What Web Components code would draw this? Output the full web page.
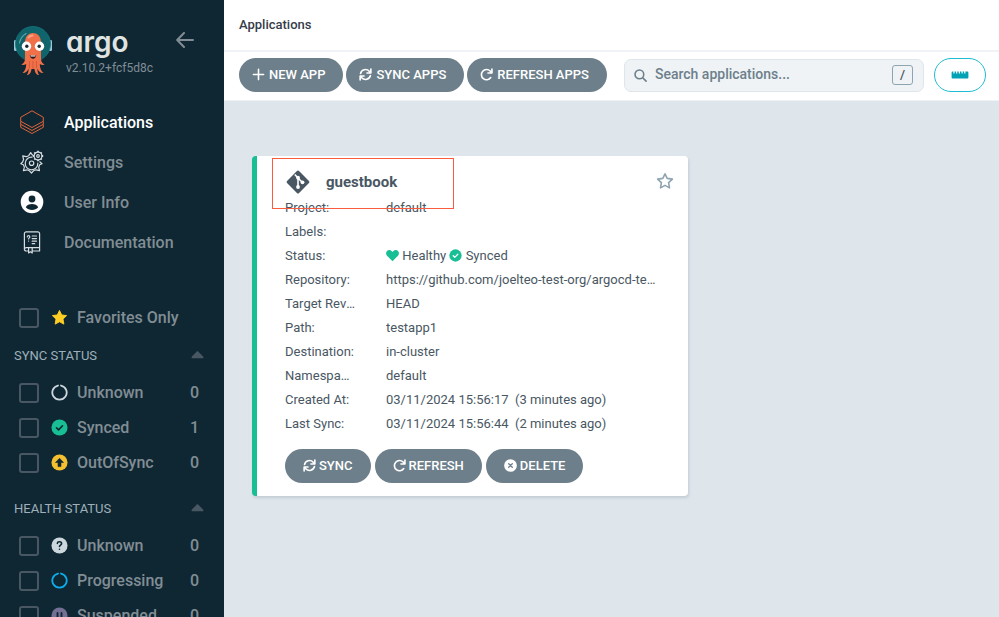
<!DOCTYPE html>
<html lang="en">
<head>
<meta charset="utf-8">
<title>Applications - Argo CD</title>
<style>
    body {
        margin: 0;
        font-family: Roboto, "Liberation Sans", sans-serif;
        font-size: 13px;
        color: #495763;
        background: #dee6ec;
    }
</style>
</head>
<body>
<argo-layout>
    <argo-sidebar slot="sidebar" version="v2.10.2+fcf5d8c">
        <argo-nav-item icon="apps" active>Applications</argo-nav-item>
        <argo-nav-item icon="settings">Settings</argo-nav-item>
        <argo-nav-item icon="user">User Info</argo-nav-item>
        <argo-nav-item icon="docs">Documentation</argo-nav-item>

        <argo-filter-row slot="filters" icon="star" label="Favorites Only"></argo-filter-row>
        <argo-filter-group slot="filters" heading="SYNC STATUS">
            <argo-filter-row icon="ring" color="#ccd6dd" label="Unknown" count="0"></argo-filter-row>
            <argo-filter-row icon="check" color="#18be94" label="Synced" count="1"></argo-filter-row>
            <argo-filter-row icon="up" color="#f4c030" label="OutOfSync" count="0"></argo-filter-row>
        </argo-filter-group>
        <argo-filter-group slot="filters" heading="HEALTH STATUS">
            <argo-filter-row icon="question" color="#ccd6dd" label="Unknown" count="0"></argo-filter-row>
            <argo-filter-row icon="ring" color="#0dadea" label="Progressing" count="0"></argo-filter-row>
            <argo-filter-row icon="pause" color="#766f94" label="Suspended" count="0"></argo-filter-row>
        </argo-filter-group>
    </argo-sidebar>

    <argo-toolbar slot="header" heading="Applications">
        <argo-button icon="plus" compact>NEW APP</argo-button>
        <argo-button icon="sync" compact>SYNC APPS</argo-button>
        <argo-button icon="refresh" compact>REFRESH APPS</argo-button>
        <argo-search slot="search"></argo-search>
    </argo-toolbar>

    <argo-app-card name="guestbook">
        <argo-field label="Project:">default</argo-field>
        <argo-field label="Labels:"></argo-field>
        <argo-field label="Status:"><argo-icon name="heart" style="--size: 13px; color: #18be94"></argo-icon> Healthy <argo-icon name="check" style="--size: 13px; --mark: #fff; color: #18be94"></argo-icon> Synced</argo-field>
        <argo-field label="Repository:">https://github.com/joelteo-test-org/argocd-test-apps</argo-field>
        <argo-field label="Target Revision:">HEAD</argo-field>
        <argo-field label="Path:">testapp1</argo-field>
        <argo-field label="Destination:">in-cluster</argo-field>
        <argo-field label="Namespace:">default</argo-field>
        <argo-field label="Created At:">03/11/2024 15:56:17 &nbsp;(3 minutes ago)</argo-field>
        <argo-field label="Last Sync:">03/11/2024 15:56:44 &nbsp;(2 minutes ago)</argo-field>
        <argo-button slot="actions" icon="sync">SYNC</argo-button>
        <argo-button slot="actions" icon="refresh">REFRESH</argo-button>
        <argo-button slot="actions" icon="times">DELETE</argo-button>
    </argo-app-card>
</argo-layout>

<script>
const ICONS = {
    apps: ['0 0 24 24', `<g fill="none" stroke="#e0643a" stroke-width="1" stroke-linejoin="round">
        <path d="M12 .8 23.3 7.300v4L12 17.500.7 11.300v-4z"/>
        <path d="M.7 11.300v3L12 20.500l11.300-6.200v-3M.7 14.300v3L12 23.500l11.300-6.200v-3"/></g>`],
    settings: ['0 0 24 24', `<g fill="none" stroke="#d6dcdf" stroke-width="1.200" stroke-linejoin="round" stroke-linecap="round">
        <path d="M12.500 5.200 10.700 2.600 8.700 5.700 6.300 6.700 2.700 5.800 3.600 9.500 2.600 12 .8 13.700l2.600 1.100 1 2.400-1 3.500 3.600-.9 2.400 1L11.500 23l2-2.200 2.500-1 3.500.9-.8-3.500 1-2.500 2.300-1.100-2.200-1.800"/>
        <path d="M12 7.200a6.300 6.300 0 1 0 5.800 6"/>
        <circle cx="11.600" cy="13.200" r="2.200"/>
        <circle cx="18" cy="6" r="3.900"/><circle cx="18" cy="6" r="1.300"/>
        <path stroke-width="1.800" stroke-linecap="butt" d="M18 .8v1.300M18 9.900v1.300M12.800 6h1.300M21.900 6h1.300M14.300 2.300l1 1M20.700 8.700l1 1M21.700 2.300l-1 1M15.300 8.700l-1 1"/></g>`],
    user: ['0 0 24 24', `<circle cx="12" cy="12" r="11.300" fill="#fff"/>
        <circle cx="12" cy="9" r="3.400" fill="#0f2733"/>
        <path fill="#0f2733" d="M5.800 17.300c1-2.300 3.500-3.200 6.200-3.200s5.200.9 6.200 3.200c-1.500 1.700-3.700 2.600-6.200 2.600s-4.700-.9-6.200-2.600z"/>`],
    docs: ['0 0 24 24', `<g fill="none" stroke="#d6dcdf" stroke-width="1.200" stroke-linecap="round" stroke-linejoin="round">
        <path d="M8.500 21H6.200a1.800 1.800 0 0 1-1.800-1.800V3.600a1.800 1.800 0 0 1 1.800-1.800h11.600a1.800 1.800 0 0 1 1.800 1.800V21h-7.400M19.600 17.700H6.200a1.700 1.700 0 0 0-1.700 1.500"/>
        <path d="M8.600 18v5l1.800-1.200 1.800 1.200v-5"/>
        <path d="M7.300 6.900c0-1.800 2.600-1.600 2.500 0 0 1-1.200 1-1.200 2.100M8.600 11v.1M12.200 6h4.300M12.200 8.600h4.300M12.200 11.200h4.300M12.200 13.700h2.500"/></g>`],
    back: ['0 0 18 16', `<path d="M17 8H1.500M8 1 1.200 8 8 15" fill="none" stroke="currentColor" stroke-width="2" stroke-linecap="round" stroke-linejoin="round"/>`],
    caret: ['0 0 14 8', `<path fill="currentColor" d="M7 0c.4 0 .7.100 1 .4l5 5.200c.8.900.4 2-.8 2H1.800c-1.200 0-1.600-1.100-.8-2L6 .4C6.300.1 6.600 0 7 0z"/>`],
    star: ['0 0 18 18', `<path fill="#ffce25" stroke="#ffce25" stroke-linejoin="round" d="m9 1.500 2.300 4.800 5.200.7-3.800 3.700.9 5.300L9 13.500 4.400 16l.9-5.300L1.500 7l5.200-.7z"/>`],
    starOutline: ['0 0 18 18', `<path fill="none" stroke="#8fa4b1" stroke-width="1.600" stroke-linejoin="round" d="m9 1.800 2.200 4.600 5.200.7-3.800 3.600.9 5.200L9 13.400l-4.500 2.500.9-5.200L1.600 7.100l5.200-.7z"/>`],
    ring: ['0 0 18 18', `<path fill="none" stroke="currentColor" stroke-width="1.900" stroke-linecap="round" d="M10.600 1.600a7.600 7.600 0 1 1-3.200 0"/>`],
    check: ['0 0 18 18', `<circle cx="9" cy="9" r="8.500" fill="currentColor"/>
        <path d="m5.800 9.300 2.200 2.200 4.200-4.300" fill="none" stroke="var(--mark, #0f2733)" stroke-width="1.700" stroke-linecap="round" stroke-linejoin="round"/>`],
    up: ['0 0 18 18', `<circle cx="9" cy="9" r="8.500" fill="currentColor"/>
        <path fill="#0f2733" stroke="#0f2733" stroke-width=".6" stroke-linejoin="round" d="M9 4.500 13.300 9h-2.700v4.300H7.400V9H4.700z"/>`],
    question: ['0 0 18 18', `<circle cx="9" cy="9" r="8.500" fill="currentColor"/>
        <path fill="none" stroke="#0f2733" stroke-width="1.700" stroke-linecap="round" d="M6.700 6.700C6.900 4.300 11.300 4.400 11.200 7c0 1.600-2.200 1.500-2.200 3M9 12.900v.1"/>`],
    pause: ['0 0 18 18', `<circle cx="9" cy="9" r="8.500" fill="currentColor"/>
        <path stroke="#0f2733" stroke-width="2" stroke-linecap="round" d="M6.900 6.300v5.400M11.100 6.300v5.400"/>`],
    plus: ['0 0 14 14', `<path d="M7 1.500v11M1.500 7h11" stroke="currentColor" stroke-width="1.700" stroke-linecap="round"/>`],
    sync: ['0 0 16 16', `<g fill="none" stroke="currentColor" stroke-width="2" stroke-linecap="round" stroke-linejoin="round">
        <path d="M1.900 6.700A6.200 6.200 0 0 1 12.600 4l1.600 1.700M14.600 1.300v4.900H9.800"/>
        <path d="M14.100 9.300A6.200 6.200 0 0 1 3.400 12l-1.600-1.700M1.400 14.700V9.800h4.800"/></g>`],
    refresh: ['0 0 16 16', `<path fill="none" stroke="currentColor" stroke-width="2" stroke-linecap="round" stroke-linejoin="round" d="M13.200 11.800A6.300 6.300 0 1 1 12.500 3.700l1.900 2M14.700 1.200v4.900H9.800"/>`],
    times: ['0 0 16 16', `<circle cx="8" cy="8" r="7.800" fill="currentColor"/>
        <path d="m5.800 5.800 4.400 4.400M10.200 5.800l-4.400 4.400" stroke="#6d7f8b" stroke-width="1.600" stroke-linecap="round"/>`],
    heart: ['0 0 16 16', `<path fill="currentColor" d="M8 15 1.300 8.300C-.4 6.500-.3 3.700 1.500 2.200 3.200.8 5.600 1.100 7.100 2.700L8 3.600l.9-.9c1.500-1.600 3.900-1.900 5.600-.5 1.800 1.500 1.900 4.300.2 6.100z"/>`],
    search: ['0 0 14 14', `<path d="M9.500 9.500 13 13M10.500 5.800a4.700 4.700 0 1 1-9.400 0 4.700 4.700 0 0 1 9.400 0z" fill="none" stroke="currentColor" stroke-width="1.700" stroke-linecap="round"/>`],
    ruler: ['0 0 18 18', `<path fill="currentColor" d="M1.500 5.500h.9v2h1.200v-2h1.500v2h1.200v-2h1.500v2H9v-2h1.500v2h1.200v-2h1.500v2h1.200v-2h2.100c.5 0 .9.400.9.900v5c0 .6-.4 1-.9 1h-15c-.5 0-.9-.4-.9-1v-5c0-.5.4-.9.900-.9z"/>`],
    git: ['0 0 26 26', `<rect x="4.500" y="4.500" width="17" height="17" rx="1.500" transform="rotate(45 13 13)" fill="#495763"/>
        <path d="M9.800 5.500 13 9v8.500M13 9l4.200 4.200" fill="none" stroke="#fff" stroke-width="1.600"/>
        <circle cx="13" cy="8.700" r="1.900" fill="#fff"/><circle cx="13" cy="18" r="1.900" fill="#fff"/><circle cx="17.500" cy="13.300" r="1.900" fill="#fff"/>`],
    mascot: ['0 0 38 50', `<rect x="0" y="14" width="3.500" height="11" rx="1.300" fill="#9cc6de"/>
        <rect x="34.500" y="14" width="3.500" height="11" rx="1.300" fill="#9cc6de"/>
        <circle cx="19" cy="18" r="17.500" fill="#10656c" stroke="#16757c" stroke-width=".8"/>
        <path d="M5.500 17A14 14 0 0 1 12 7.500" fill="none" stroke="#5fa5a8" stroke-width="1.200" stroke-linecap="round"/>
        <path fill="#f0704a" d="M19 7c-5 0-8 4-8 9.500V31c0 4-.5 6-3.800 7.500 1.500.8 3.500.4 5-.5 0 4-1.200 7-3.700 9 3 .2 5-1.500 6-4.500.2 2.500-.3 4.500-1.500 6.500 2.700 0 4-2.500 4.500-6h3c.5 3.500 1.800 6 4.500 6-1.200-2-1.700-4-1.500-6.500 1 3 3 4.700 6 4.500-2.500-2-3.700-5-3.700-9 1.500.9 3.500 1.300 5 .5C27.500 37 27 35 27 31V16.500C27 11 24 7 19 7z"/>
        <path d="M14.500 11.500c1-1.300 2.500-2 4-2" fill="none" stroke="#fba588" stroke-width="2" stroke-linecap="round"/>
        <path d="M15.500 35v7M19 35v8M22.500 35v7" stroke="#c94f32" stroke-width=".7"/>
        <circle cx="12.500" cy="20.300" r="4.700" fill="#fff"/><circle cx="25.500" cy="20.300" r="4.700" fill="#fff"/>
        <circle cx="12.800" cy="20.300" r="1.700" fill="#1b2b36"/><circle cx="25.200" cy="20.300" r="1.700" fill="#1b2b36"/>
        <path d="M15.800 29c2.100.8 4.300.8 6.400 0-.2 5-6.200 5-6.400 0z" fill="#30161a"/><path d="M16.600 29.300c1.600.4 3.200.4 4.800 0v1.300h-4.800z" fill="#fff"/>`]
};

// Attaches an open shadow root filled with the given markup
function render(host, html) {
    const template = document.createElement('template');
    template.innerHTML = html;
    host.attachShadow({ mode: 'open' }).appendChild(template.content.cloneNode(true));
}

class ArgoIcon extends HTMLElement {
    constructor() {
        super();
        this.attachShadow({ mode: 'open' });
    }

    connectedCallback() {
        const [box, body] = ICONS[this.getAttribute('name')];
        this.shadowRoot.innerHTML = `
            <style>
                :host { display: inline-block; flex: none; width: var(--size, 18px); height: var(--size-y, var(--size, 18px)); vertical-align: -2px; }
                svg { display: block; width: 100%; height: 100%; }
            </style>
            <svg viewBox="${box}" aria-hidden="true">${body}</svg>`;
    }
}
customElements.define('argo-icon', ArgoIcon);

class ArgoLayout extends HTMLElement {
    constructor() {
        super();
        render(this, `
            <style>
                :host { display: grid; grid-template-columns: 224px minmax(0, 1fr); height: 100vh; overflow: hidden; }
                main { display: flex; flex-direction: column; min-width: 0; }
                .content { flex: 1; padding: 55px 28px; display: grid; grid-template-columns: minmax(0, 436px); align-content: start; }
            </style>
            <slot name="sidebar"></slot>
            <main>
                <slot name="header"></slot>
                <div class="content"><slot></slot></div>
            </main>`);
    }
}
customElements.define('argo-layout', ArgoLayout);

class ArgoSidebar extends HTMLElement {
    constructor() {
        super();
        render(this, `
            <style>
                :host { display: block; background: #0f2733; color: #818d94; overflow: hidden; }
                header { display: flex; align-items: flex-start; padding: 26px 30px 0 14px; height: 76px; }
                .logo { --size: 38px; --size-y: 50px; }
                .brand { flex: 1; margin-left: 14px; }
                .name { font: 600 28px/32px Inter, Lato, sans-serif; font-feature-settings: "cv11"; color: #dfe4e2; }
                .version { font-size: 12px; line-height: 20px; }
                .back { border: 0; padding: 6px 0; background: none; color: #818d94; --size: 18px; --size-y: 16px; }
                nav { display: flex; flex-direction: column; }
                .filters { margin-top: 38px; }
            </style>
            <header>
                <argo-icon class="logo" name="mascot"></argo-icon>
                <div class="brand">
                    <div class="name">argo</div>
                    <div class="version"></div>
                </div>
                <button class="back" aria-label="Collapse sidebar"><argo-icon name="back"></argo-icon></button>
            </header>
            <nav><slot></slot></nav>
            <div class="filters"><slot name="filters"></slot></div>`);
    }

    connectedCallback() {
        this.shadowRoot.querySelector('.version').textContent = this.getAttribute('version');
    }
}
customElements.define('argo-sidebar', ArgoSidebar);

class ArgoNavItem extends HTMLElement {
    connectedCallback() {
        if (this.shadowRoot) return;
        render(this, `
            <style>
                :host { display: block; }
                a { display: flex; align-items: center; gap: 20px; height: 40px; padding-left: 20px; color: inherit; text-decoration: none; font-size: 16px; font-weight: 500; --size: 24px; }
                :host([active]) a { color: #fff; }
            </style>
            <a href="#"><argo-icon name="${this.getAttribute('icon')}"></argo-icon><span><slot></slot></span></a>`);
    }
}

class ArgoFilterRow extends HTMLElement {
    connectedCallback() {
        if (this.shadowRoot) return;
        const count = this.getAttribute('count');
        render(this, `
            <style>
                :host { display: block; }
                label { display: flex; align-items: center; height: 35px; padding: 0 25px 0 19px; font-size: 16px; font-weight: 500; }
                input { appearance: none; box-sizing: border-box; width: 20px; height: 20px; margin: 0 12px 0 0; border: 2px solid #495763; border-radius: 3px; }
                argo-icon { --size: 17px; color: ${this.getAttribute('color') || 'inherit'}; margin-right: 9px; }
                .label { flex: 1; }
            </style>
            <label>
                <input type="checkbox">
                <argo-icon name="${this.getAttribute('icon')}"></argo-icon>
                <span class="label">${this.getAttribute('label')}</span>
                ${count === null ? '' : `<span>${count}</span>`}
            </label>`);
    }
}

class ArgoFilterGroup extends HTMLElement {
    constructor() {
        super();
        render(this, `
            <style>
                :host { display: block; margin-bottom: 8px; }
                .head { display: flex; align-items: center; justify-content: space-between; width: 100%; height: 40px; padding: 0 20px 0 14px; border: 0; background: none; font: 400 13px Roboto, sans-serif; color: #9fb0ba; }
                argo-icon { --size: 13px; --size-y: 8px; color: #495763; }
            </style>
            <button class="head"><span class="heading"></span><argo-icon name="caret"></argo-icon></button>
            <slot></slot>`);
    }

    connectedCallback() {
        this.shadowRoot.querySelector('.heading').textContent = this.getAttribute('heading');
    }
}

class ArgoButton extends HTMLElement {
    connectedCallback() {
        if (this.shadowRoot) return;
        render(this, `
            <style>
                :host { display: inline-block; flex: none; }
                button { display: flex; align-items: center; gap: 3px; height: 34px; padding: 0 18px 2px; border: 0; border-radius: 17px; background: #6d7f8b; color: #fff; font: 500 13px Roboto, sans-serif; white-space: nowrap; --size: 13px; }
                :host([compact]) button { gap: 4px; padding-left: 13px; }
            </style>
            <button><argo-icon name="${this.getAttribute('icon')}"></argo-icon><slot></slot></button>`);
    }
}

class ArgoSearch extends HTMLElement {
    constructor() {
        super();
        render(this, `
            <style>
                :host { display: flex; flex: 1; min-width: 0; }
                .box { display: flex; align-items: center; flex: 1; box-sizing: border-box; min-width: 0; height: 33px; padding: 0 10px 0 9px; border: 1px solid #dee6ec; border-radius: 7px; background: #eff3f5; color: #6d7f8b; }
                argo-icon { --size: 13px; }
                input { flex: 1; min-width: 0; margin-left: 8px; padding: 0 0 2px; border: 0; outline: 0; background: none; font: 500 14px Roboto, sans-serif; color: inherit; }
                input::placeholder { color: inherit; opacity: 1; }
                kbd { box-sizing: border-box; width: 21px; height: 20px; border: 1px solid #8fa4b1; border-radius: 3px; font: 500 13px/18px Roboto, sans-serif; text-align: center; color: #495763; }
            </style>
            <div class="box">
                <argo-icon name="search"></argo-icon>
                <input type="text" placeholder="Search applications..." aria-label="Search applications">
                <kbd>/</kbd>
            </div>`);
    }
}

class ArgoToolbar extends HTMLElement {
    constructor() {
        super();
        render(this, `
            <style>
                :host { display: block; background: #fff; }
                h1 { margin: 0; padding: 0 15px; border-bottom: 2px solid #eff3f7; font-size: 13px; font-weight: 500; line-height: 50px; color: #363c4a; }
                .tools { display: flex; align-items: center; padding: 6px 13px 8px 15px; border-bottom: 1px solid #eef2f5; }
                .buttons { display: flex; gap: 3px; margin-right: 17px; }
                .ruler { display: flex; align-items: center; justify-content: center; box-sizing: border-box; width: 52px; height: 34px; margin-left: 10px; padding: 0; border: 1px solid #1fbdd0; border-radius: 17px; background: #fff; color: #00a2b3; }
            </style>
            <h1></h1>
            <div class="tools">
                <div class="buttons"><slot></slot></div>
                <slot name="search"></slot>
                <button class="ruler" aria-label="Toggle health bar"><argo-icon name="ruler"></argo-icon></button>
            </div>`);
    }

    connectedCallback() {
        this.shadowRoot.querySelector('h1').textContent = this.getAttribute('heading');
    }
}

class ArgoField extends HTMLElement {
    constructor() {
        super();
        render(this, `
            <style>
                :host { display: grid; grid-template-columns: 70px minmax(0, 1fr); column-gap: 31px; line-height: 24px; }
                span { overflow: hidden; text-overflow: ellipsis; white-space: nowrap; }
            </style>
            <span class="label"></span>
            <span><slot></slot></span>`);
    }

    connectedCallback() {
        this.shadowRoot.querySelector('.label').textContent = this.getAttribute('label');
    }
}

class ArgoAppCard extends HTMLElement {
    constructor() {
        super();
        render(this, `
            <style>
                :host { position: relative; display: block; padding: 12px 14px 13px 28px; border-left: 5px solid #18be94; border-radius: 4px; background: #fff; box-shadow: 1px 2px 3px #c3ccd3; }
                .title { display: flex; align-items: center; height: 28px; }
                .title argo-icon { --size: 26px; }
                h2 { flex: 1; margin: 0 0 0 15px; font-size: 15px; font-weight: 700; line-height: 20px; }
                .title button { border: 0; padding: 0 0 2px; background: none; }
                .title button argo-icon { --size: 18px; display: block; }
                .fields { padding-right: 18px; }
                .actions { display: flex; gap: 4px; margin-top: 13px; }
                .highlight { position: absolute; top: 2px; left: 15px; width: 180px; height: 49px; border: 1px solid #fb5c3f; }
            </style>
            <div class="title">
                <argo-icon name="git"></argo-icon>
                <h2></h2>
                <button aria-label="Add to favorites"><argo-icon name="starOutline"></argo-icon></button>
            </div>
            <div class="fields"><slot></slot></div>
            <div class="actions"><slot name="actions"></slot></div>
            <div class="highlight"></div>`);
    }

    connectedCallback() {
        this.shadowRoot.querySelector('h2').textContent = this.getAttribute('name');
    }
}

customElements.define('argo-nav-item', ArgoNavItem);
customElements.define('argo-filter-row', ArgoFilterRow);
customElements.define('argo-filter-group', ArgoFilterGroup);
customElements.define('argo-button', ArgoButton);
customElements.define('argo-search', ArgoSearch);
customElements.define('argo-toolbar', ArgoToolbar);
customElements.define('argo-field', ArgoField);
customElements.define('argo-app-card', ArgoAppCard);
</script>
</body>
</html>
